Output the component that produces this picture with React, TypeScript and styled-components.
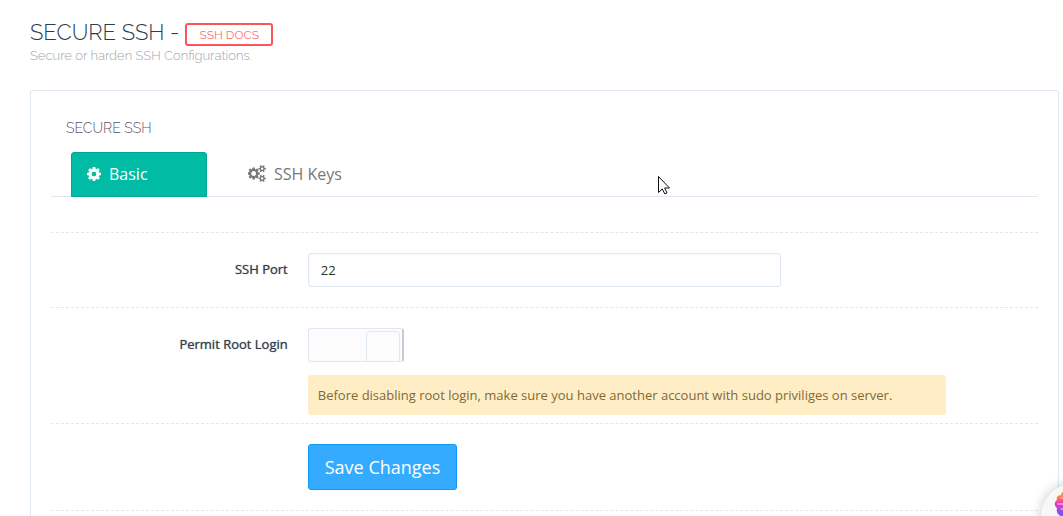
import React, { useState } from "react";
import styled, { createGlobalStyle } from "styled-components";

const GlobalStyle = createGlobalStyle`
  *, *::before, *::after { box-sizing: border-box; }
  html { scrollbar-width: none; }
  body {
    margin: 0;
    background: #fff;
    color: #3e4855;
    font: 13px/20px "Open Sans", sans-serif;
  }
  button, input { font-family: inherit; }
`;

const Page = styled.main`
  padding: 19px 4px 0 30px;
`;

const PageHeader = styled.header`
  margin-bottom: 25px;
  font-family: Raleway, Lato, sans-serif;
  font-weight: 300;
`;

const TitleRow = styled.div`
  display: flex;
  align-items: flex-start;
  gap: 6px;
  height: 28px;
`;

const Title = styled.h1`
  margin: 0;
  color: #2b3c4e;
  font-size: 22px;
  font-weight: 300;
  line-height: 26px;
`;

const DocsLink = styled.a`
  margin-top: 4px;
  padding: 2px 12px 0;
  border: 2px solid #fc5458;
  border-radius: 3px;
  color: #ff6f73;
  font-size: 12px;
  font-weight: 400;
  line-height: 17px;
  text-decoration: none;
`;

const Subtitle = styled.p`
  margin: 0;
  color: #a2a6ab;
  font-size: 13px;
  line-height: 18px;
`;

const Panel = styled.section`
  padding: 25px 20px 40px;
  border: 1px solid #dfe8f1;
  border-radius: 3px;
`;

const PanelTitle = styled.h2`
  margin: 0 15px 12px;
  color: #5c5562;
  font-family: Raleway, Lato, sans-serif;
  font-size: 14px;
  font-weight: 300;
  line-height: 24px;
`;

const TabList = styled.div`
  display: flex;
  gap: 25px;
  margin-bottom: 35px;
  padding-left: 20px;
  border-bottom: 1px solid #dfe8f1;
`;

const Tab = styled.button<{ $active: boolean }>`
  display: flex;
  align-items: center;
  gap: 8px;
  min-width: 136px;
  height: 45px;
  margin-bottom: -1px;
  padding: 0 15px 2px;
  border: 1px solid ${(p) => (p.$active ? "#00a792" : "transparent")};
  border-radius: 3px 3px 0 0;
  background: ${(p) => (p.$active ? "#00bca4" : "transparent")};
  color: ${(p) => (p.$active ? "#fff" : "#7a7873")};
  font-size: 16px;
  line-height: 24px;
  cursor: pointer;
`;

const TabIcon = styled.svg`
  flex: none;
  fill: currentColor;
`;

const Form = styled.form`
  border-top: 1px dashed #dfe8f1;
`;

const Row = styled.div<{ $tight?: boolean }>`
  display: grid;
  grid-template-columns: repeat(12, 1fr);
  row-gap: 13px;
  padding: 20px 0 ${(p) => (p.$tight ? 8 : 20)}px;
  border-bottom: 1px dashed #dfe8f1;
`;

const Label = styled.label`
  grid-column: span 3;
  padding: 6px 10px 0;
  color: #343d49;
  font-weight: 500;
  text-align: right;
  text-shadow: 0 0 1px #6b7480;
`;

const Field = styled.div<{ $span: number }>`
  grid-column: 4 / span ${(p) => p.$span};
  padding: 0 10px;
`;

const TextInput = styled.input`
  display: block;
  width: 100%;
  height: 34px;
  padding: 6px 12px;
  border: 1px solid #dfe8f1;
  border-radius: 3px;
  background: #fff;
  box-shadow: inset 1px 1px 3px #f6f6f6;
  color: #2b2f33;
  font-size: 13px;
`;

const Switch = styled.input`
  display: flex;
  justify-content: flex-end;
  width: 96px;
  height: 34px;
  margin: 0;
  padding: 2px 0 0;
  appearance: none;
  overflow: hidden;
  border: 1px solid #dfe8f1;
  border-right: 2px solid #c3cbd6;
  border-radius: 3px;
  background: #fcfcfc;

  &::before {
    content: "";
    width: 34px;
    height: 34px;
    margin-right: 2px;
    border: 1px solid #dfe8f1;
    border-radius: 3px;
    background: #fcfcfc;
  }

  &:checked {
    justify-content: flex-start;
  }
`;

const Notice = styled.p`
  margin: 0;
  padding: 10px;
  border-radius: 3px;
  background: #ffedc6;
  color: #7f6a33;
`;

const SaveButton = styled.button`
  display: block;
  height: 46px;
  padding: 0 16px;
  border: 1px solid #0d99f9;
  border-radius: 3px;
  background: #35abff;
  color: #fff;
  font-size: 18px;
  line-height: 24px;
  cursor: pointer;
`;

const ChatLauncher = styled.button`
  position: fixed;
  right: -40px;
  bottom: -34px;
  display: grid;
  place-items: center;
  width: 62px;
  height: 66px;
  padding: 0 0 20px;
  border: 0;
  border-radius: 50%;
  background: #f7f7f7;
  box-shadow: 0 0 12px rgba(0, 0, 0, 0.22);
`;

const Pointer = styled.svg`
  position: absolute;
  left: 658px;
  top: 176px;
  pointer-events: none;
`;

const COG =
  "M1024 768q0-106-75-181t-181-75-181 75-75 181 75 181 181 75 181-75 75-181zm512-109v222q0 12-8 23t-20 13l-185 28q-19 54-39 91 35 50 107 138 10 12 10 25t-9 23q-27 37-99 108t-94 71q-12 0-26-9l-138-108q-44 23-91 38-16 136-29 186-7 28-36 28h-222q-14 0-24.500-8.500t-11.500-21.500l-28-184q-49-16-90-37l-141 107q-10 9-25 9-14 0-25-11-126-114-165-168-7-10-7-23 0-12 8-23 15-21 51-66.500t54-70.500q-27-50-41-99l-183-27q-13-2-21-12.500t-8-23.500v-222q0-12 8-23t19-13l186-28q14-46 39-92-40-57-107-138-10-12-10-24 0-10 9-23 26-36 98.500-107.500t94.500-71.500q13 0 26 10l138 107q44-23 91-38 16-136 29-186 7-28 36-28h222q14 0 24.500 8.500t11.500 21.500l28 184q49 16 90 37l142-107q9-9 24-9 13 0 25 10 129 119 165 170 7 8 7 22 0 12-8 23-15 21-51 66.500t-54 70.500q26 50 41 98l183 28q13 2 21 12.500t8 23.500z";

const BIG_COG =
  "M832 896q0-106-75-181t-181-75-181 75-75 181 75 181 181 75 181-75 75-181zm384-91v185q0 10-7 19.500t-16 10.500l-155 24q-11 35-32 76 34 48 90 115 7 11 7 20 0 12-7 19-23 30-82.500 89.500t-78.500 59.500q-11 0-21-7l-115-90q-37 19-77 31-11 108-23 155-7 24-30 24h-186q-11 0-20-7.500t-10-17.500l-23-153q-34-10-75-31l-118 89q-7 7-20 7-11 0-21-8-144-133-144-160 0-9 7-19 10-14 41-53t47-61q-23-44-35-82l-152-24q-10-1-17-9.500t-7-19.500v-185q0-10 7-19.500t16-10.500l155-24q11-35 32-76-34-48-90-115-7-11-7-20 0-12 7-20 22-30 82-89t79-59q11 0 21 7l115 90q34-18 77-32 11-108 23-154 7-24 30-24h186q11 0 20 7.500t10 17.500l23 153q34 10 75 31l118-89q8-7 20-7 11 0 21 8 144 133 144 160 0 8-7 19-12 16-42 54t-45 60q23 48 34 82l152 23q10 2 17 10.500t7 19.500z";

const SMALL_COG =
  "M1600 1408q0-52-38-90t-90-38-90 38-38 90q0 53 37.500 90.500t90.500 37.500 90.500-37.500 37.500-90.500zM1856 1338v140q0 16-149 31-12 27-30 52 51 113 51 138 0 4-4 7-122 71-124 71-8 0-46-47t-52-68q-20 2-30 2t-30-2q-14 21-52 68t-46 47q-2 0-124-71-4-3-4-7 0-25 51-138-18-25-30-52-149-15-149-31v-140q0-16 149-31 13-29 30-52-51-113-51-138 0-4 4-7 4-2 35-20t59-34 30-16q8 0 46 46.500t52 67.500q20-2 30-2t30 2q51-71 92-112l6-2q4 0 124 70 4 3 4 7 0 25-51 138 17 23 30 52 149 15 149 31z";

function CogIcon() {
  return (
    <TabIcon viewBox="0 0 1536 1536" width="14" height="14" aria-hidden="true">
      <path fillRule="evenodd" d={COG} />
    </TabIcon>
  );
}

function CogsIcon() {
  return (
    <TabIcon viewBox="0 0 1856 1792" width="18" height="17" aria-hidden="true">
      <path fillRule="evenodd" d={BIG_COG} />
      <path fillRule="evenodd" d={SMALL_COG} />
      <path fillRule="evenodd" d={SMALL_COG} transform="translate(0 -1024)" />
    </TabIcon>
  );
}

export default function App() {
  const [tab, setTab] = useState("basic");
  return (
    <>
      <GlobalStyle />
      <Page>
        <PageHeader>
          <TitleRow>
            <Title>SECURE SSH -</Title>
            <DocsLink href="#docs">SSH DOCS</DocsLink>
          </TitleRow>
          <Subtitle>Secure or harden SSH Configurations.</Subtitle>
        </PageHeader>
        <Panel>
          <PanelTitle>SECURE SSH</PanelTitle>
          <TabList role="tablist">
            <Tab type="button" role="tab" aria-selected={tab === "basic"} $active={tab === "basic"} onClick={() => setTab("basic")}>
              <CogIcon />
              Basic
            </Tab>
            <Tab type="button" role="tab" aria-selected={tab === "keys"} $active={tab === "keys"} onClick={() => setTab("keys")}>
              <CogsIcon />
              SSH Keys
            </Tab>
          </TabList>
          <Form onSubmit={(e) => e.preventDefault()}>
            <Row>
              <Label htmlFor="port">SSH Port</Label>
              <Field $span={6}>
                <TextInput id="port" type="text" defaultValue="22" />
              </Field>
            </Row>
            <Row $tight>
              <Label htmlFor="root-login">Permit Root Login</Label>
              <Field $span={6}>
                <Switch id="root-login" type="checkbox" />
              </Field>
              <Field $span={8}>
                <Notice>
                  Before disabling root login, make sure you have another account with sudo priviliges on server.
                </Notice>
              </Field>
            </Row>
            <Row>
              <Field $span={6}>
                <SaveButton type="submit">Save Changes</SaveButton>
              </Field>
            </Row>
          </Form>
        </Panel>
      </Page>
      <Pointer width="12" height="19" viewBox="0 0 12 19" aria-hidden="true">
        <path d="M.5.5v16l3.700-3.600 2.600 5 2.200-1-2.400-4.900h4.900z" fill="#fff" stroke="#111" />
      </Pointer>
      <ChatLauncher type="button" aria-label="Open assistant">
        <svg width="36" height="34" viewBox="0 0 36 34" aria-hidden="true">
          <defs>
            <linearGradient id="brain" x1="0" y1="0" x2="0" y2="1">
              <stop offset="0" stopColor="#ff9a2e" />
              <stop offset=".15" stopColor="#ff8a3a" />
              <stop offset=".4" stopColor="#ec38bc" />
              <stop offset=".7" stopColor="#8a4cf5" />
              <stop offset="1" stopColor="#6a5cff" />
            </linearGradient>
          </defs>
          <path
            d="M15 2c-4-2-8 0-8 3-3 0-5 3-4 5-3 2-3 6 0 8-1 4 1 7 4 8 1 5 7 7 11 4 4 3 10 1 11-4 3-1 5-4 4-8 3-2 3-6 0-8 1-2-1-5-4-5 0-3-4-5-8-3l-3 2z"
            fill="url(#brain)"
          />
          <path d="M7 8h4M4 14h7M7 19h5" stroke="#fbe3fb" strokeLinecap="round" fill="none" />
        </svg>
      </ChatLauncher>
    </>
  );
}
